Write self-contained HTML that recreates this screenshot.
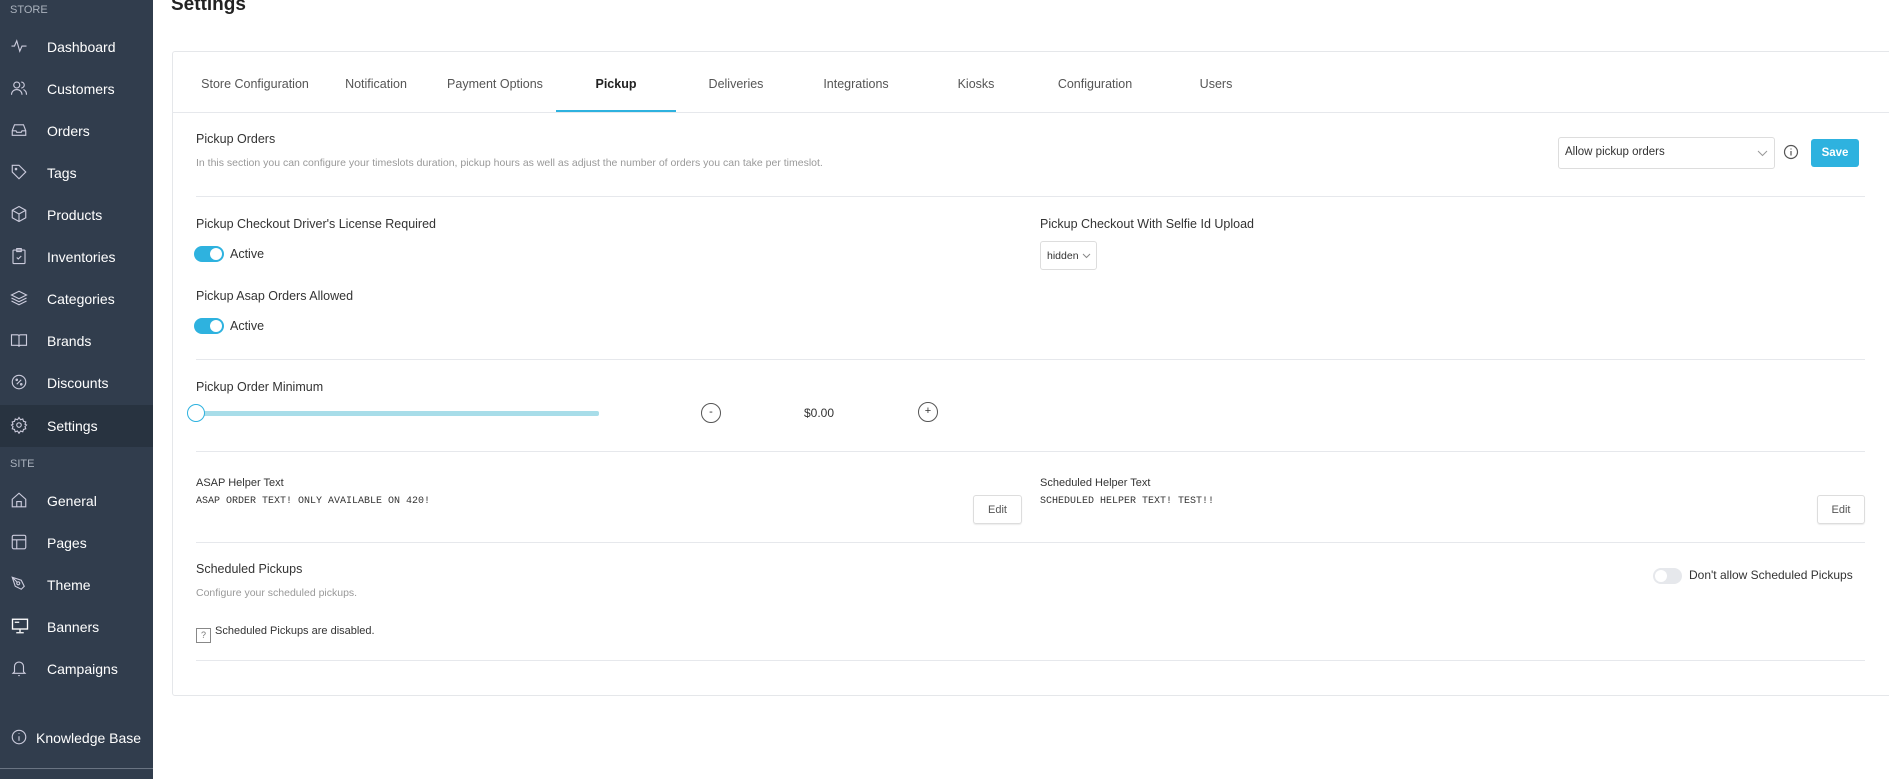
<!DOCTYPE html>
<html><head><meta charset="utf-8"><style>
*{box-sizing:border-box;margin:0;padding:0}
body{width:1889px;height:779px;overflow:hidden;background:#fff;font-family:"Liberation Sans",Arial,sans-serif;position:relative;color:#333}
.sb{position:absolute;left:0;top:0;width:153px;height:779px;background:#313d4d}
.sec{position:absolute;left:10px;font-size:11px;color:#aab2bd}
.it{position:absolute;left:0;width:153px;height:42px;color:#fff;font-size:14px}
.it span{position:absolute;left:47px;top:13px}
.it svg{position:absolute;left:10px;top:11px}
.act{background:#283340}
.a{position:absolute;white-space:nowrap}
.card{position:absolute;left:172px;top:51px;width:1730px;height:645px;border:1px solid #e5e7ea;border-radius:3px}
.tab{position:absolute;top:77px;font-size:12.5px;color:#555;transform:translateX(-50%)}
.hr{position:absolute;left:196px;width:1669px;height:1px;background:#e6e8ec}
.t{font-size:12.5px;color:#333}
.d{font-size:10.5px;color:#999}
.tg{position:absolute;width:30px;height:16px;border-radius:8px;background:#2eb2df}
.tg:after{content:"";position:absolute;right:2px;top:2px;width:12px;height:12px;border-radius:50%;background:#fff}
.mono{font-family:"Liberation Mono",monospace;font-size:10px;color:#333}
.btn{position:absolute;border:1px solid #ddd;border-radius:3px;font-size:11px;color:#555;text-align:center;line-height:28px;box-shadow:0 1px 1px rgba(0,0,0,.08)}
.circ{position:absolute;width:20px;height:20px;border:1px solid #555;border-radius:50%;font-size:11px;text-align:center;line-height:16px}
</style></head><body>
<div class="sb">
<div class="sec" style="top:4px">STORE</div>
<svg width="0" height="0"></svg>
<div class="it" style="top:26px"><svg width="18" height="18" viewBox="0 0 24 24" fill="none" stroke="#ccd" stroke-width="1.5"><path d="M2 12h4l3-7 4 14 3-7h6"/></svg><span>Dashboard</span></div>
<div class="it" style="top:68px"><svg width="18" height="18" viewBox="0 0 24 24" fill="none" stroke="#ccd" stroke-width="1.5"><circle cx="9" cy="8" r="4"/><path d="M2 21c0-4 3-7 7-7s7 3 7 7M15 4a4 4 0 010 8M18 14c2 1 4 3 4 7"/></svg><span>Customers</span></div>
<div class="it" style="top:110px"><svg width="18" height="18" viewBox="0 0 24 24" fill="none" stroke="#ccd" stroke-width="1.5"><path d="M3 13l3-8h12l3 8v6H3zM3 13h5l1 2h6l1-2h5"/></svg><span>Orders</span></div>
<div class="it" style="top:152px"><svg width="18" height="18" viewBox="0 0 24 24" fill="none" stroke="#ccd" stroke-width="1.5"><path d="M3 3h9l9 9-9 9-9-9z"/><circle cx="8" cy="8" r="1"/></svg><span>Tags</span></div>
<div class="it" style="top:194px"><svg width="18" height="18" viewBox="0 0 24 24" fill="none" stroke="#ccd" stroke-width="1.5"><path d="M12 2l9 5v10l-9 5-9-5V7zM3 7l9 5 9-5M12 12v10"/></svg><span>Products</span></div>
<div class="it" style="top:236px"><svg width="18" height="18" viewBox="0 0 24 24" fill="none" stroke="#ccd" stroke-width="1.5"><rect x="4" y="4" width="16" height="18" rx="1"/><path d="M9 2h6v4H9zM9 14l2 2 4-4"/></svg><span>Inventories</span></div>
<div class="it" style="top:278px"><svg width="18" height="18" viewBox="0 0 24 24" fill="none" stroke="#ccd" stroke-width="1.5"><path d="M12 3l10 5-10 5L2 8zM2 12l10 5 10-5M2 16l10 5 10-5"/></svg><span>Categories</span></div>
<div class="it" style="top:320px"><svg width="18" height="18" viewBox="0 0 24 24" fill="none" stroke="#ccd" stroke-width="1.5"><path d="M2 5h8a2 2 0 012 2v14a2 2 0 00-2-2H2zM22 5h-8a2 2 0 00-2 2v14a2 2 0 012-2h8z"/></svg><span>Brands</span></div>
<div class="it" style="top:362px"><svg width="18" height="18" viewBox="0 0 24 24" fill="none" stroke="#ccd" stroke-width="1.5"><circle cx="12" cy="12" r="9"/><path d="M9 15l6-6"/><circle cx="9" cy="9" r="1"/><circle cx="15" cy="15" r="1"/></svg><span>Discounts</span></div>
<div class="it act" style="top:405px"><svg width="18" height="18" viewBox="0 0 24 24" fill="none" stroke="#ccd" stroke-width="1.5"><circle cx="12" cy="12" r="3"/><path d="M12 2l2 3 3-1 1 3 3 1-1 3 2 1-2 2 1 3-3 1-1 3-3-1-2 3-2-3-3 1-1-3-3-1 1-3-2-2 2-1-1-3 3-1 1-3 3 1z"/></svg><span>Settings</span></div>
<div class="sec" style="top:458px">SITE</div>
<div class="it" style="top:480px"><svg width="18" height="18" viewBox="0 0 24 24" fill="none" stroke="#ccd" stroke-width="1.5"><path d="M3 11l9-8 9 8v10H3zM9 21v-7h6v7"/></svg><span>General</span></div>
<div class="it" style="top:522px"><svg width="18" height="18" viewBox="0 0 24 24" fill="none" stroke="#ccd" stroke-width="1.5"><rect x="3" y="3" width="18" height="18" rx="2"/><path d="M3 9h18M9 9v12"/></svg><span>Pages</span></div>
<div class="it" style="top:564px"><svg width="18" height="18" viewBox="0 0 24 24" fill="none" stroke="#ccd" stroke-width="1.5"><path d="M3 3l12 4 4 8-4 4-8-4zM3 3l7 7"/><circle cx="11" cy="11" r="2"/></svg><span>Theme</span></div>
<div class="it" style="top:606px"><svg width="20" height="18" viewBox="0 0 24 24" fill="none" stroke="#fff" stroke-width="1.8"><rect x="2" y="3" width="20" height="13"/><path d="M5 7h6M12 16v4M7 21h10"/></svg><span>Banners</span></div>
<div class="it" style="top:648px"><svg width="18" height="18" viewBox="0 0 24 24" fill="none" stroke="#ccd" stroke-width="1.5"><path d="M6 17V10a6 6 0 0112 0v7l2 2H4zM11 22h2"/></svg><span>Campaigns</span></div>
<div class="it" style="top:717px"><svg width="18" height="18" viewBox="0 0 24 24" fill="none" stroke="#ccd" stroke-width="1.5"><circle cx="12" cy="12" r="9"/><path d="M12 11v6M12 7v1"/></svg><span style="left:36px">Knowledge Base</span></div>
<div style="position:absolute;left:0;top:768px;width:153px;height:1px;background:#6a7482"></div>
</div>

<div class="a" style="left:171px;top:-6px;font-size:19px;font-weight:bold;color:#222">Settings</div>
<div class="card"></div>
<div class="tab" style="left:255px">Store Configuration</div>
<div class="tab" style="left:376px">Notification</div>
<div class="tab" style="left:495px">Payment Options</div>
<div class="tab" style="left:616px;color:#222;font-weight:bold">Pickup</div>
<div class="tab" style="left:736px">Deliveries</div>
<div class="tab" style="left:856px">Integrations</div>
<div class="tab" style="left:976px">Kiosks</div>
<div class="tab" style="left:1095px">Configuration</div>
<div class="tab" style="left:1216px">Users</div>
<div style="position:absolute;left:172px;top:112px;width:1717px;height:1px;background:#e6e8ec"></div>
<div style="position:absolute;left:556px;top:110px;width:120px;height:2px;background:#2eb2df"></div>

<div class="a t" style="left:196px;top:132px">Pickup Orders</div>
<div class="a d" style="left:196px;top:157px">In this section you can configure your timeslots duration, pickup hours as well as adjust the number of orders you can take per timeslot.</div>
<div class="a" style="left:1558px;top:137px;width:217px;height:32px;border:1px solid #ddd;border-radius:3px;font-size:11.5px;padding:8px 6px;color:#333">Allow pickup orders<svg style="position:absolute;right:6px;top:12px" width="11" height="7" viewBox="0 0 11 7" fill="none" stroke="#999"><path d="M1 1l4.5 4.5L10 1"/></svg></div>
<svg class="a" style="left:1783px;top:144px" width="16" height="16" viewBox="0 0 16 16" fill="none" stroke="#555" stroke-width="1.2"><circle cx="8" cy="8" r="6.5"/><path d="M8 7v4.5M8 4.5v1"/></svg>
<div class="a" style="left:1811px;top:139px;width:48px;height:28px;background:#2eb2df;border-radius:3px;color:#fff;font-size:11.5px;font-weight:bold;text-align:center;line-height:28px">Save</div>
<div class="hr" style="top:196px"></div>

<div class="a t" style="left:196px;top:217px">Pickup Checkout Driver's License Required</div>
<div class="tg" style="left:194px;top:246px"></div><div class="a t" style="left:230px;top:247px">Active</div>
<div class="a t" style="left:196px;top:289px">Pickup Asap Orders Allowed</div>
<div class="tg" style="left:194px;top:318px"></div><div class="a t" style="left:230px;top:319px">Active</div>
<div class="a t" style="left:1040px;top:217px">Pickup Checkout With Selfie Id Upload</div>
<div class="a" style="left:1040px;top:241px;width:57px;height:29px;border:1px solid #ddd;border-radius:3px;font-size:10.5px;padding:8px 6px">hidden<svg style="position:absolute;right:5px;top:11px" width="9" height="6" viewBox="0 0 9 6" fill="none" stroke="#888"><path d="M1 1l3.5 3.5L8 1"/></svg></div>
<div class="hr" style="top:359px"></div>

<div class="a t" style="left:196px;top:380px">Pickup Order Minimum</div>
<div style="position:absolute;left:196px;top:411px;width:403px;height:5px;background:#a8dde9;border-radius:2px"></div>
<div style="position:absolute;left:187px;top:404px;width:18px;height:18px;border:1.5px solid #2eb2df;border-radius:50%;background:#fff"></div>
<div class="circ" style="left:701px;top:403px">-</div>
<div class="a" style="left:804px;top:406px;font-size:12px">$0.00</div>
<div class="circ" style="left:918px;top:402px">+</div>
<div class="hr" style="top:451px"></div>

<div class="a" style="left:196px;top:477px;font-size:11px">ASAP Helper Text</div>
<div class="a mono" style="left:196px;top:496px">ASAP ORDER TEXT! ONLY AVAILABLE ON 420!</div>
<div class="btn" style="left:973px;top:495px;width:49px;height:29px">Edit</div>
<div class="a" style="left:1040px;top:477px;font-size:11px">Scheduled Helper Text</div>
<div class="a mono" style="left:1040px;top:496px">SCHEDULED HELPER TEXT! TEST!!</div>
<div class="btn" style="left:1817px;top:495px;width:48px;height:29px">Edit</div>
<div class="hr" style="top:542px"></div>

<div class="a t" style="left:196px;top:562px">Scheduled Pickups</div>
<div class="a d" style="left:196px;top:587px">Configure your scheduled pickups.</div>
<div class="a" style="left:196px;top:628px;width:15px;height:15px;border:1px solid #888;font-size:9px;color:#777;text-align:center;line-height:13px">?</div>
<div class="a" style="left:215px;top:625px;font-size:11px">Scheduled Pickups are disabled.</div>
<div style="position:absolute;left:1653px;top:568px;width:29px;height:16px;border-radius:8px;background:#e6e8ec"><div style="position:absolute;left:2px;top:2px;width:12px;height:12px;border-radius:50%;background:#fff"></div></div>
<div class="a" style="left:1689px;top:568px;font-size:12px">Don't allow Scheduled Pickups</div>
<div class="hr" style="top:660px"></div>
</body></html>
